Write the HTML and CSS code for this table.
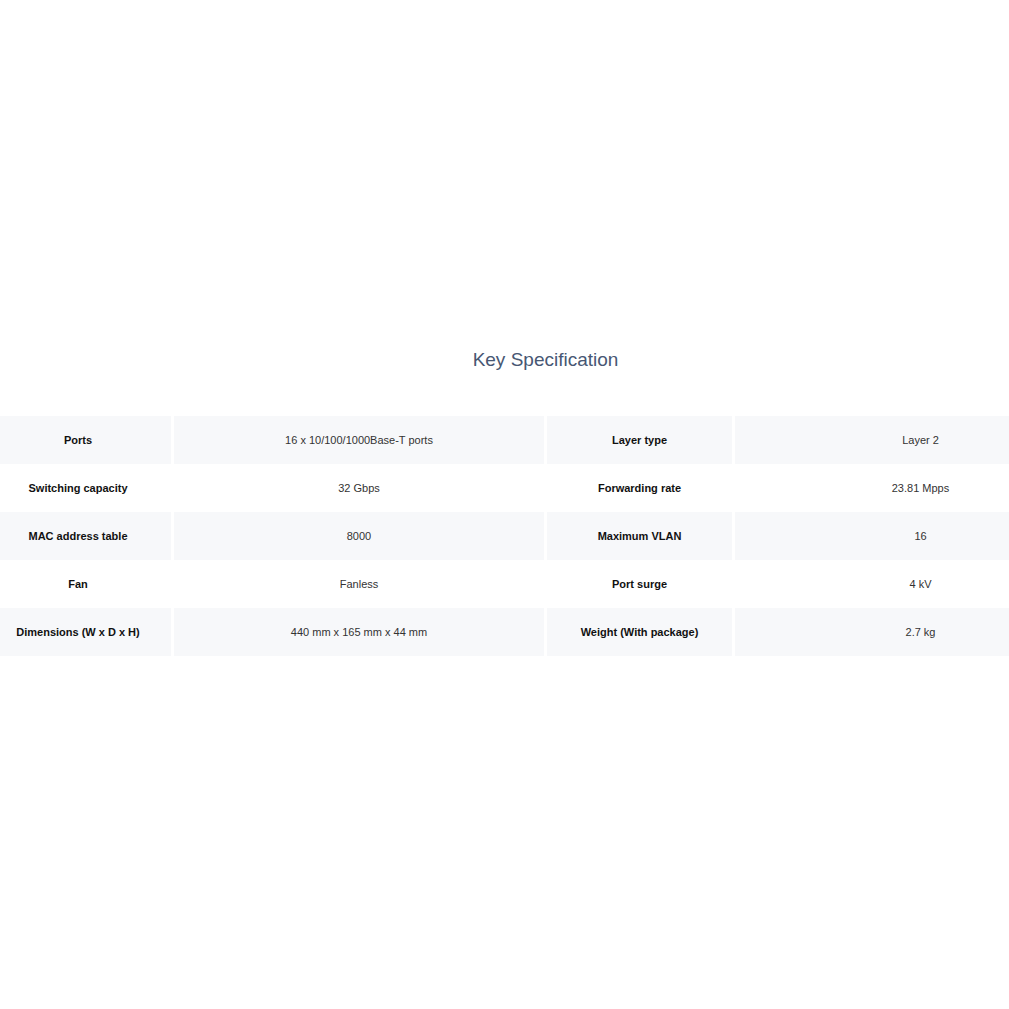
FILE: index.html
```html
<!DOCTYPE html>
<html>
<head>
<meta charset="utf-8">
<link rel="stylesheet" href="styles.css">
</head>
<body>
<section class="spec">
  <h2 class="spec-title">Key Specification</h2>
  <div class="spec-table">
    <div class="row alt">
      <div class="cell label first">Ports</div>
      <div class="cell value">16 x 10/100/1000Base-T ports</div>
      <div class="cell label">Layer type</div>
      <div class="cell value last">Layer 2</div>
    </div>
    <div class="row">
      <div class="cell label first">Switching capacity</div>
      <div class="cell value">32 Gbps</div>
      <div class="cell label">Forwarding rate</div>
      <div class="cell value last">23.81 Mpps</div>
    </div>
    <div class="row alt">
      <div class="cell label first">MAC address table</div>
      <div class="cell value">8000</div>
      <div class="cell label">Maximum VLAN</div>
      <div class="cell value last">16</div>
    </div>
    <div class="row">
      <div class="cell label first">Fan</div>
      <div class="cell value">Fanless</div>
      <div class="cell label">Port surge</div>
      <div class="cell value last">4 kV</div>
    </div>
    <div class="row alt">
      <div class="cell label first">Dimensions (W x D x H)</div>
      <div class="cell value">440 mm x 165 mm x 44 mm</div>
      <div class="cell label">Weight (With package)</div>
      <div class="cell value last">2.7 kg</div>
    </div>
  </div>
</section>
</body>
</html>
```
FILE: styles.css
```css
html, body {
  margin: 0;
  padding: 0;
  background: #ffffff;
}
body {
  font-family: "Liberation Sans", Arial, sans-serif;
}
.spec {
  padding-top: 346px;
}
.spec-title {
  margin: 0;
  padding-left: 82px;
  height: 70px;
  text-align: center;
  font-size: 19px;
  font-weight: normal;
  line-height: 28px;
  color: #475773;
}
.spec-table {
  display: flex;
  flex-direction: column;
}
.row {
  display: grid;
  grid-template-columns: 171px 370px 185px 1fr;
  column-gap: 3px;
  height: 48px;
}
.cell {
  display: flex;
  align-items: center;
  justify-content: center;
  font-size: 11px;
  color: #333333;
}
.cell.first {
  padding-right: 15px;
}
.cell.last {
  padding-left: 97px;
}
.row.alt .cell {
  background: #f7f8fa;
}
.label {
  font-weight: bold;
  color: #111111;
}
```
